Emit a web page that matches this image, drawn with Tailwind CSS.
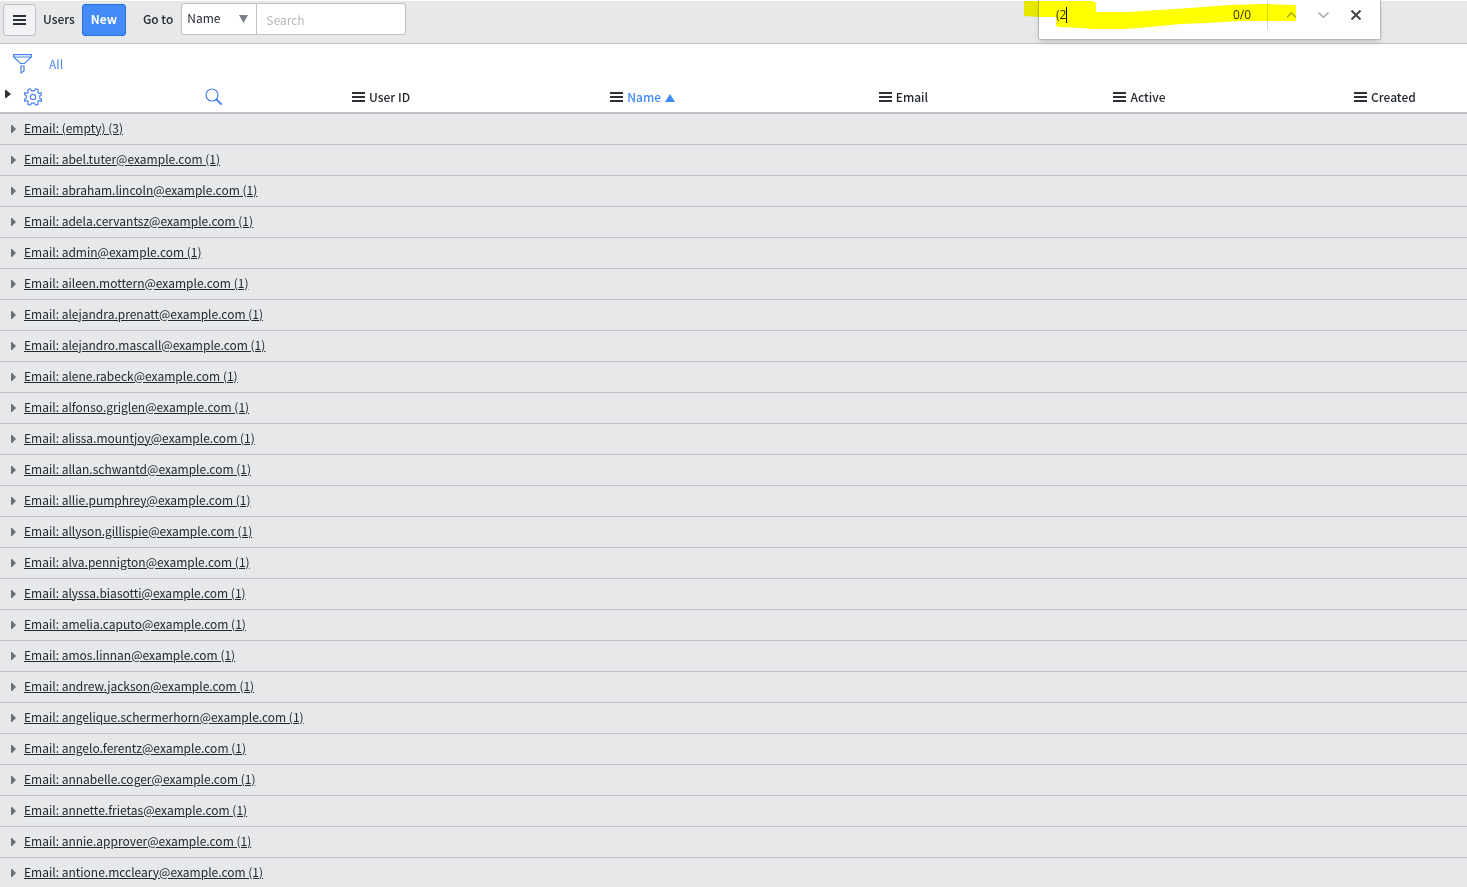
<!DOCTYPE html>
<html lang="en">
<head>
  <meta charset="UTF-8">
  <meta name="viewport" content="width=device-width, initial-scale=1.0">
  <title>Users</title>
  <script src="https://cdn.jsdelivr.net/npm/@tailwindcss/browser@4"></script>
</head>
<body class="relative min-h-screen overflow-x-hidden bg-white font-['Noto_Sans_CJK_SC',sans-serif] text-xs leading-5 font-normal text-[#23292f]">

  <!-- Toolbar -->
  <header class="flex items-start h-11 pt-[3px] pl-[3px] bg-[#e6e8ea] border-t border-t-white border-b border-b-[#bdc0c4]">
    <button aria-label="List menu" class="flex items-center justify-center w-[33px] h-8 bg-[#f1f2f3] border border-[#bdc0c4] rounded-[3px]">
      <svg width="13" height="10" viewBox="0 0 13 10" fill="#2e3136"><path d="M0 0h13v2H0zM0 4h13v2H0zM0 8h13v2H0z"/></svg>
    </button>
    <h1 class="ml-[7px] mt-[5px] font-medium">Users</h1>
    <button class="ml-[7px] w-11 h-8 pb-[2px] bg-[#428bf9] border border-[#2a6fd6] rounded-[3px] text-white font-bold">New</button>
    <label for="field" class="ml-[17px] mt-[5px] font-medium">Go to</label>
    <div class="relative ml-2 -mt-px flex h-8">
      <select id="field" class="appearance-none w-[76px] h-8 pl-[5px] pb-[2px] bg-white border border-[#bdc0c4] rounded-l-[3px]">
        <option>Name</option>
      </select>
      <svg class="absolute left-[58px] top-3 pointer-events-none" width="9" height="8" viewBox="0 0 9 8" fill="#7b8087"><path d="M0 0h9L4.500 8z"/></svg>
      <input type="text" aria-label="Search" placeholder="Search" class="w-[149px] h-8 pl-[9px] bg-white border border-l-0 border-[#bdc0c4] rounded-r-[3px] placeholder:text-[#b5b8bc]">
    </div>
  </header>

  <!-- Filter breadcrumb -->
  <nav class="flex items-center h-10 pl-[13px]">
    <button aria-label="Filter">
      <svg width="19" height="22" viewBox="0 0 19 22" fill="none" stroke="#4a84e8" stroke-width="1.200"><path d="M.6 1.600h17.800v2.400L11.500 10.500h-4L.6 4zM.6 4h17.800M8 13h3v5l-3 2z"/></svg>
    </button>
    <a href="#" class="ml-[17px] text-[#4a84e8]">All</a>
  </nav>

  <table class="w-full table-fixed border-collapse">
    <thead>
      <tr class="h-[29px] text-left border-b-2 border-[#bdbec3]">
        <th class="w-[14%] p-0 pb-[2px]">
          <div class="flex items-center pl-[5px]">
            <button aria-label="Expand all" class="mb-[6px]">
              <svg width="6" height="8" viewBox="0 0 6 8" fill="#2e3136"><path d="M0 0h1l5 4-5 4H0z"/></svg>
            </button>
            <button aria-label="Personalize list" class="ml-[13px]">
              <svg width="18" height="18" viewBox="0 0 18 18" fill="none" stroke="#4a84e8" stroke-width="1.200" stroke-linejoin="round"><path d="M6.300.7 7.400 2.800h3.200L11.700.7l2.600 1.100-.6 2.300 1.200 1.200 2.300-.6.600 1.600-2 1.500v2.400l2 1.500-.6 1.600-2.300-.6-1.200 1.200.6 2.300-2.600 1.100-1.100-2.100H7.400l-1.100 2.100-2.600-1.100.6-2.300-1.200-1.200-2.300.6-.6-1.600 2-1.500V7.800l-2-1.500.6-1.600 2.300.6 1.200-1.200-.6-2.300z"/><circle cx="9" cy="9" r="2.700"/></svg>
            </button>
          </div>
        </th>
        <th class="w-[10%] p-0 pb-[2px]">
          <button aria-label="Search columns" class="block">
            <svg width="18" height="18" viewBox="0 0 18 18" fill="none" stroke="#4a84e8" stroke-width="1.200"><circle cx="7" cy="7" r="6"/><path d="m11.200 11.200 5.600 5.400" stroke-width="2"/></svg>
          </button>
        </th>
        <th class="w-[17.600%] p-0 pb-[2px] font-medium">
          <div class="flex items-center gap-1"><svg width="13" height="10" viewBox="0 0 13 10" fill="#2e3136"><path d="M0 0h13v2H0zM0 4h13v2H0zM0 8h13v2H0z"/></svg>User ID</div>
        </th>
        <th class="w-[18.300%] p-0 pb-[2px] font-medium" aria-sort="ascending">
          <div class="flex items-center gap-1 text-[#428bf9]"><svg width="13" height="10" viewBox="0 0 13 10" fill="#2e3136"><path d="M0 0h13v2H0zM0 4h13v2H0zM0 8h13v2H0z"/></svg>Name<svg class="mt-[2px]" width="10" height="8" viewBox="0 0 10 8" fill="#428bf9"><path d="M5 0l5 8H0z"/></svg></div>
        </th>
        <th class="w-[16%] p-0 pb-[2px] font-medium">
          <div class="flex items-center gap-1"><svg width="13" height="10" viewBox="0 0 13 10" fill="#2e3136"><path d="M0 0h13v2H0zM0 4h13v2H0zM0 8h13v2H0z"/></svg>Email</div>
        </th>
        <th class="w-[16.400%] p-0 pb-[2px] font-medium">
          <div class="flex items-center gap-1"><svg width="13" height="10" viewBox="0 0 13 10" fill="#2e3136"><path d="M0 0h13v2H0zM0 4h13v2H0zM0 8h13v2H0z"/></svg>Active</div>
        </th>
        <th class="p-0 pb-[2px] font-medium">
          <div class="flex items-center gap-1"><svg width="13" height="10" viewBox="0 0 13 10" fill="#2e3136"><path d="M0 0h13v2H0zM0 4h13v2H0zM0 8h13v2H0z"/></svg>Created</div>
        </th>
      </tr>
    </thead>
    <tbody id="groups">
      <!-- Group rows are added here -->
    </tbody>
  </table>

  <!-- Find in page -->
  <div class="absolute top-0 right-[86px] flex items-start w-[343px] h-10 pt-[5px] pl-[17px] bg-white border border-t-0 border-[#b4b6b9] rounded-b-[2px] shadow-md font-['Open_Sans',sans-serif] font-normal text-[#333]">
    <input type="text" aria-label="Find" value="(2" class="w-[10px] h-5">
    <span class="mt-[2px] w-px h-4 bg-black"></span>
    <span class="ml-auto">0/0</span>
    <span class="ml-4 -mt-1 w-px h-7 bg-[#d5d5d5]"></span>
    <button aria-label="Previous" class="ml-[19px] mt-[7px]">
      <svg width="9" height="6" viewBox="0 0 9 6" fill="none" stroke="#a8a8a8" stroke-width="1.500"><path d="M0 5.200 4.500.9 9 5.200"/></svg>
    </button>
    <button aria-label="Next" class="ml-[22px] mt-[7px]">
      <svg width="11" height="6" viewBox="0 0 11 6" fill="none" stroke="#a8a8a8" stroke-width="1.500"><path d="M.5.600 5.500 5.200 10.500.600"/></svg>
    </button>
    <button aria-label="Close" class="ml-[22px] mr-[19px] mt-[5px]">
      <svg width="10" height="10" viewBox="0 0 10 10" fill="none" stroke="#444" stroke-width="2"><path d="m.5.500 9 9M9.500.500l-9 9"/></svg>
    </button>
  </div>
  <!-- Highlighter stroke over the find bar -->
  <svg class="absolute top-0 right-[171px] mix-blend-multiply pointer-events-none" width="272" height="29" viewBox="0 0 272 29" fill="#ff0"><path d="M0 1h69l3 2v9h31l33-2 30-2 40-3 34-1 32 1v16h-58l-30 2-28 1-30 3-26 2H67l-10-1-22-1-3-1v-9H16L0 16z"/></svg>

  <script>
    const groups = [
      ["(empty)", 3],
      ["abel.tuter@example.com", 1],
      ["abraham.lincoln@example.com", 1],
      ["adela.cervantsz@example.com", 1],
      ["admin@example.com", 1],
      ["aileen.mottern@example.com", 1],
      ["alejandra.prenatt@example.com", 1],
      ["alejandro.mascall@example.com", 1],
      ["alene.rabeck@example.com", 1],
      ["alfonso.griglen@example.com", 1],
      ["alissa.mountjoy@example.com", 1],
      ["allan.schwantd@example.com", 1],
      ["allie.pumphrey@example.com", 1],
      ["allyson.gillispie@example.com", 1],
      ["alva.pennigton@example.com", 1],
      ["alyssa.biasotti@example.com", 1],
      ["amelia.caputo@example.com", 1],
      ["amos.linnan@example.com", 1],
      ["andrew.jackson@example.com", 1],
      ["angelique.schermerhorn@example.com", 1],
      ["angelo.ferentz@example.com", 1],
      ["annabelle.coger@example.com", 1],
      ["annette.frietas@example.com", 1],
      ["annie.approver@example.com", 1],
      ["antione.mccleary@example.com", 1]
    ];

    document.getElementById("groups").innerHTML = groups.map(([email, count]) => `
      <tr class="h-[31px] bg-[#e6e8ea] border-b border-[#bdc0c4]">
        <td colspan="7" class="p-0">
          <div class="flex items-center pl-[11px]">
            <button aria-label="Expand group"><svg width="5" height="8" viewBox="0 0 5 8" fill="#6b7078"><path d="M0 0h1l4 4-4 4H0z"/></svg></button>
            <a href="#" class="ml-2 pb-[2px] underline">Email: ${email} (${count})</a>
          </div>
        </td>
      </tr>`).join("");
  </script>
</body>
</html>
